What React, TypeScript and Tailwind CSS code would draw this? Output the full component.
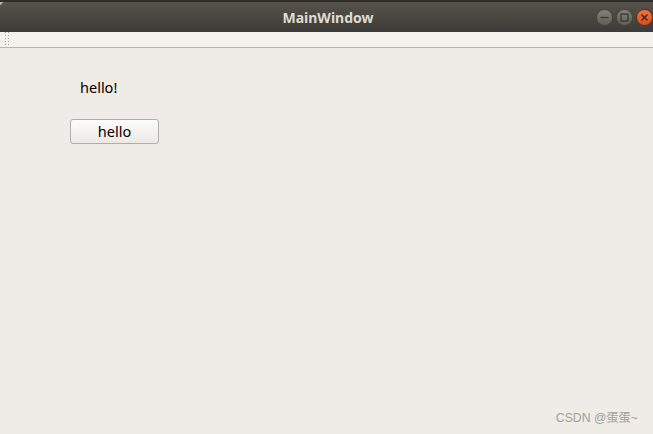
export default function App() {
  return (
    <div className="relative flex h-[434px] w-[653px] flex-col overflow-hidden bg-[#efebe7] font-['Noto_Sans',sans-serif] text-black">
      {/* title bar */}
      <div className="relative flex h-[32px] shrink-0 items-center justify-center border-t-2 border-[#2e2d29] bg-gradient-to-b from-[#57534b] to-[#3c3b37] pl-[3px]">
        <span className="text-[14px] font-bold text-[#dfdbd2]">MainWindow</span>
        <svg className="absolute top-0 left-0" width="4" height="4" viewBox="0 0 4 4">
          <path d="M0 0h3.5L0 3.5z" fill="#b4b2ae" />
        </svg>
        <div className="absolute top-[7px] right-0 flex gap-[3px]">
          <button className="flex h-[17px] w-[17px] items-center justify-center rounded-full border border-[#45443f] bg-gradient-to-b from-[#85827b] to-[#5f5d57]">
            <svg width="11" height="11" viewBox="0 0 11 11">
              <path d="M1.5 5.5h8" stroke="#35342f" strokeWidth="1.2" />
            </svg>
          </button>
          <button className="flex h-[17px] w-[17px] items-center justify-center rounded-full border border-[#45443f] bg-gradient-to-b from-[#85827b] to-[#5f5d57]">
            <svg width="11" height="11" viewBox="0 0 11 11">
              <rect x="2" y="2" width="7" height="7" fill="none" stroke="#35342f" strokeWidth="1.2" />
            </svg>
          </button>
          <button className="flex h-[17px] w-[17px] items-center justify-center rounded-full border border-[#5e3220] bg-gradient-to-b from-[#f0743f] to-[#dc4c1c]">
            <svg width="11" height="11" viewBox="0 0 11 11">
              <path d="M2.5 2.5l6 6M8.5 2.5l-6 6" stroke="#3c2a20" strokeWidth="1.4" />
            </svg>
          </button>
        </div>
      </div>

      {/* tool bar */}
      <div className="flex h-[16px] shrink-0 items-stretch border-b border-[#b9b5ae] bg-[#f5f2ee] pl-[5px]">
        <div className="grid h-[15px] w-[4px] grid-cols-2 content-start gap-x-[2px] gap-y-[2px]">
          {Array.from({ length: 10 }).map((_, i) => (
            <span key={i} className="h-px w-px bg-[#a09c95]" />
          ))}
        </div>
      </div>

      {/* central widget */}
      <div className="flex flex-col items-start pt-[28px] pl-[70px]">
        <span className="pl-[10px] text-[14.5px] leading-[22px]">hello!</span>
        <button className="mt-[21px] h-[25px] w-[89px] rounded-[3px] border border-[#b1aea8] bg-gradient-to-b from-[#fcfcfb] to-[#ece9e5] text-[14.5px] leading-none">
          hello
        </button>
      </div>

      <span className="absolute right-[15px] bottom-[8px] font-['Liberation_Sans','Noto_Sans_CJK_SC',sans-serif] text-[12.25px] leading-[16px] text-[#a3a19e]">
        CSDN @蛋蛋~
      </span>
    </div>
  );
}
